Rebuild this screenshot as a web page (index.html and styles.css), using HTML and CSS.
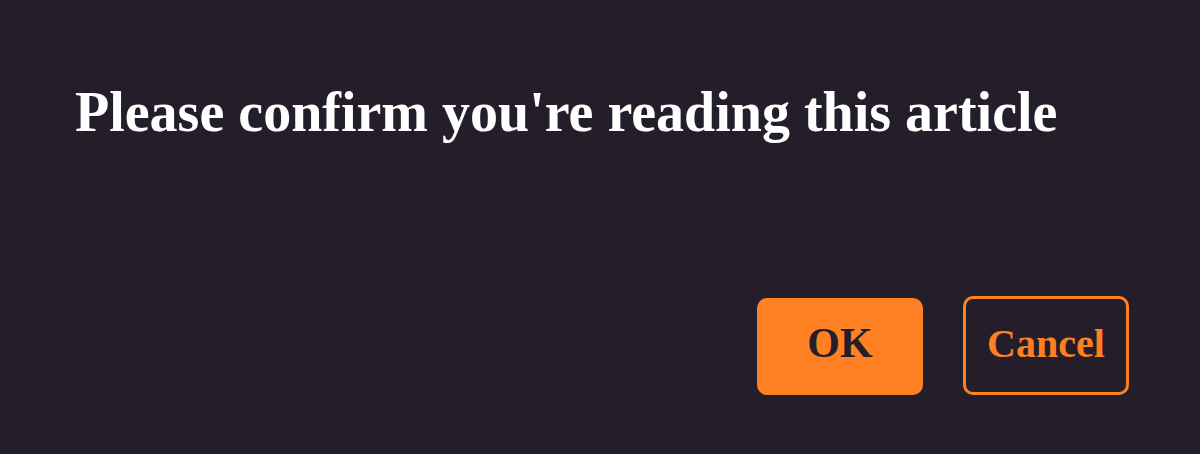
FILE: index.html
```html
<!DOCTYPE html>
<html>
<head>
<meta charset="utf-8">
<link rel="stylesheet" href="styles.css">
</head>
<body>
<div class="dialog">
  <h1 class="title">Please confirm you're reading this article</h1>
  <div class="actions">
    <button class="btn btn-ok">OK</button>
    <button class="btn btn-cancel">Cancel</button>
  </div>
</div>
</body>
</html>
```
FILE: styles.css
```css
html, body {
  margin: 0;
  padding: 0;
  background: #231e2a;
  height: 100%;
}
.dialog {
  box-sizing: border-box;
  height: 454px;
  padding: 80px 71px 0 75px;
  display: flex;
  flex-direction: column;
  font-family: "Liberation Serif", "Times New Roman", serif;
}
.title {
  margin: 0;
  color: #ffffff;
  font-size: 56px;
  font-weight: bold;
  line-height: 64px;
}
.actions {
  margin-top: 152px;
  display: flex;
  justify-content: flex-end;
  align-items: flex-end;
  gap: 40px;
}
.btn {
  box-sizing: border-box;
  width: 166px;
  font-family: "Liberation Serif", "Times New Roman", serif;
  font-weight: bold;
  border-radius: 10px;
  cursor: pointer;
}
.btn-ok {
  height: 97px;
  font-size: 42px;
  background: #ff7f23;
  color: #231e2a;
  border: none;
  padding: 0 0 8px;
}
.btn-cancel {
  height: 99px;
  font-size: 40px;
  background: transparent;
  color: #ff7f23;
  border: 3px solid #ff7f23;
  padding: 0 0 4px;
}
```
